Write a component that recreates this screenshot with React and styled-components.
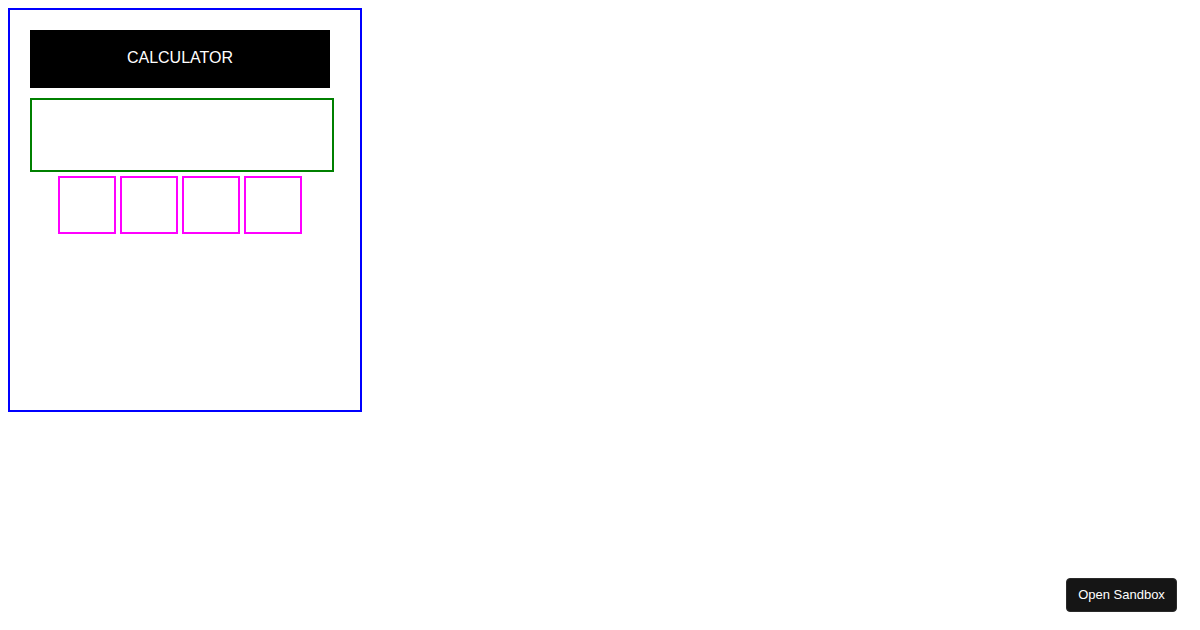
import React from "react";
import styled, { createGlobalStyle } from "styled-components";

const Global = createGlobalStyle`
  body {
    margin: 8px;
    background: #ffffff;
    font-family: "Liberation Sans", Arial, sans-serif;
  }
`;

const Frame = styled.div`
  box-sizing: content-box;
  width: 310px;
  height: 360px;
  padding: 20px;
  border: 2px solid #0000ff;
  display: flex;
  flex-direction: column;
`;

const Header = styled.div`
  box-sizing: border-box;
  width: 300px;
  height: 58px;
  padding-bottom: 2px;
  background: #000000;
  color: #ffffff;
  font-size: 16px;
  display: flex;
  align-items: center;
  justify-content: center;
`;

const Display = styled.div`
  box-sizing: content-box;
  width: 300px;
  height: 70px;
  margin-top: 10px;
  border: 2px solid #008000;
`;

const KeyRow = styled.div`
  width: 300px;
  margin-top: 4px;
  display: flex;
  justify-content: center;
  gap: 4px;
`;

const Key = styled.div`
  box-sizing: content-box;
  width: 54px;
  height: 54px;
  border: 2px solid #ff00ff;
`;

const SandboxButton = styled.button`
  position: fixed;
  right: 23px;
  bottom: 18px;
  width: 111px;
  height: 34px;
  border: 1px solid #2a2a2a;
  border-radius: 4px;
  background: #151515;
  color: #ffffff;
  font-family: "Liberation Sans", Arial, sans-serif;
  font-size: 13px;
  padding: 0 0 2px 0;
  cursor: pointer;
`;

export default function App() {
  return (
    <>
      <Global />
      <Frame>
        <Header>CALCULATOR</Header>
        <Display />
        <KeyRow>
          {[0, 1, 2, 3].map((i) => (
            <Key key={i} />
          ))}
        </KeyRow>
      </Frame>
      <SandboxButton>Open Sandbox</SandboxButton>
    </>
  );
}
